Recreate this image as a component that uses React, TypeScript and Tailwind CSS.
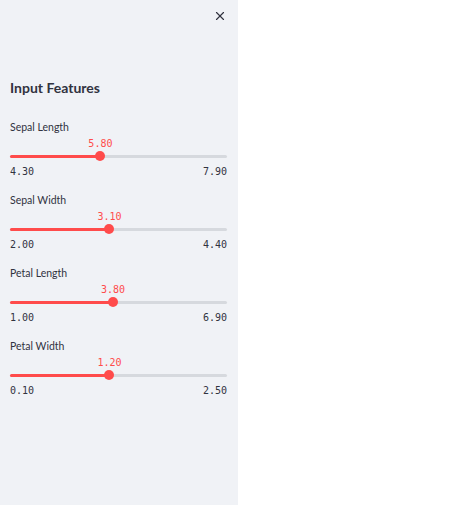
import { X } from "lucide-react";

type Feature = { label: string; min: number; max: number; value: number };

const FEATURES: Feature[] = [
  { label: "Sepal Length", min: 4.3, max: 7.9, value: 5.8 },
  { label: "Sepal Width", min: 2.0, max: 4.4, value: 3.1 },
  { label: "Petal Length", min: 1.0, max: 6.9, value: 3.8 },
  { label: "Petal Width", min: 0.1, max: 2.5, value: 1.2 },
];

const mono = "font-['DejaVu_Sans_Mono','Liberation_Mono',monospace]";

function Slider({ f }: { f: Feature }) {
  const pct = ((f.value - f.min) / (f.max - f.min)) * 100;
  return (
    <div className="mb-[12px]">
      <p className="text-[10.5px] leading-[16px] text-[#31333f]">{f.label}</p>
      <div className="relative h-[16px]">
        <span
          className={`absolute top-[1px] -translate-x-1/2 text-[10px] leading-[16px] text-[#ff4b4b] ${mono}`}
          style={{ left: `${pct}%` }}
        >
          {f.value.toFixed(2)}
        </span>
      </div>
      <div className="relative h-[10px] flex items-center">
        <div className="h-[3px] w-full rounded-full bg-[#d6d9de]" />
        <div className="absolute left-0 h-[3px] rounded-full bg-[#ff4b4b]" style={{ width: `${pct}%` }} />
        <div
          className="absolute h-[10px] w-[10px] -translate-x-1/2 rounded-full bg-[#ff4b4b]"
          style={{ left: `${pct}%` }}
        />
      </div>
      <div className={`mt-[3px] flex justify-between text-[10px] leading-[16px] text-[#31333f] ${mono}`}>
        <span>{f.min.toFixed(2)}</span>
        <span>{f.max.toFixed(2)}</span>
      </div>
    </div>
  );
}

export default function App() {
  return (
    <div className="flex h-[505px] w-[474px] bg-white font-['Lato','Noto_Sans',sans-serif]">
      <aside className="flex w-[238px] flex-col bg-[#f0f2f6] pl-[10px] pr-[11px] pt-[9px]">
        <div className="flex justify-end">
          <X size={14} strokeWidth={2} className="text-[#31333f]" />
        </div>
        <h2 className="mt-[55px] text-[14px] font-bold leading-[20px] text-[#31333f]">Input Features</h2>
        <div className="mt-[21px]">
          {FEATURES.map((f) => (
            <Slider key={f.label} f={f} />
          ))}
        </div>
      </aside>
    </div>
  );
}
